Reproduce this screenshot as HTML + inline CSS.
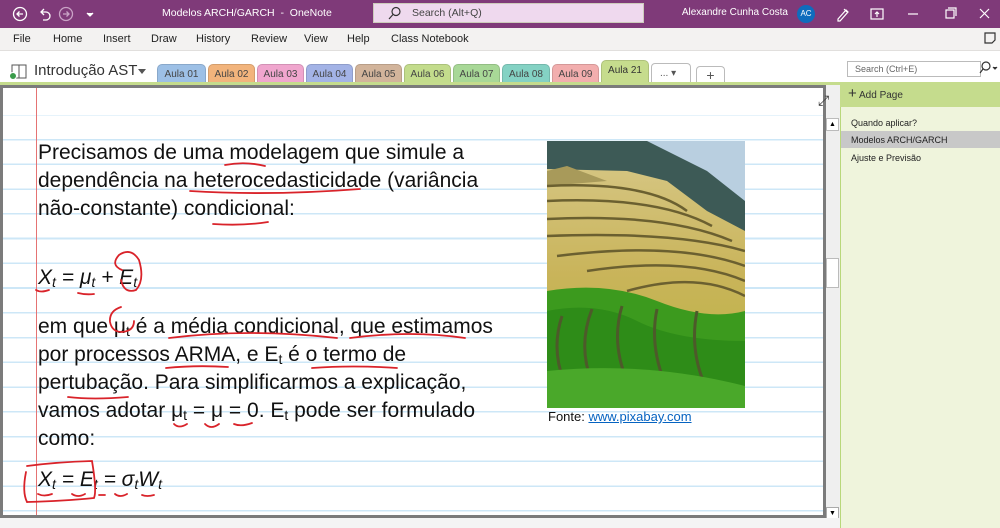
<!DOCTYPE html>
<html><head><meta charset="utf-8"><style>
*{margin:0;padding:0;box-sizing:border-box}
body{width:1000px;height:528px;overflow:hidden;font-family:"Liberation Sans",sans-serif;background:#fff;position:relative}
.a{position:absolute}
.tb{left:0;top:0;width:1000px;height:28px;background:#7f3a79;color:#fff;font-size:10.5px}
.menu{left:0;top:28px;width:1000px;height:23px;background:#f3f2f1;border-bottom:1px solid #e1dfdd;font-size:11px;color:#222}
.menu span{position:absolute;top:5px}
.tab{top:64px;height:19px;border-radius:5px 5px 0 0;font-size:10px;color:#444;text-align:center;line-height:19px;border:1px solid rgba(0,0,0,.12);border-bottom:none}
.line{position:absolute;left:38px;font-size:21px;color:#111;line-height:28px;white-space:nowrap}
.m{font-style:italic}
sub{font-size:14px;vertical-align:-3px;line-height:0}
</style></head><body>
<div class="a tb">
 <svg class="a" style="left:12px;top:6px" width="90" height="16" fill="none" stroke="#fff" stroke-width="1.3">
  <circle cx="8" cy="8" r="6.5"/><path d="M11 8H5M7.5 5.5L5 8l2.5 2.5"/>
  <path d="M32 3l-3 3 3 3M29 6h5a4 4 0 0 1 0 8h-3"/>
  <circle cx="54" cy="8" r="6.5" stroke="#c9a3c6"/><path d="M51 8h6M54.5 5.5L57 8l-2.5 2.5" stroke="#c9a3c6"/>
  <path d="M75 7l3 3 3-3" fill="#fff"/>
 </svg>
 <div class="a" style="left:162px;top:7px">Modelos ARCH/GARCH&nbsp; - &nbsp;OneNote</div>
 <div class="a" style="left:373px;top:3px;width:271px;height:20px;background:#efd9ee;border:1px solid #ccb;color:#444;padding:3px 0 0 38px">Search (Alt+Q)</div>
 <svg class="a" style="left:388px;top:6px" width="14" height="14" fill="none" stroke="#333" stroke-width="1.2"><circle cx="8" cy="5.5" r="4"/><path d="M5 8.5L1 13"/></svg>
 <div class="a" style="right:212px;top:7px;font-size:10px">Alexandre Cunha Costa</div>
 <div class="a" style="left:797px;top:5px;width:18px;height:18px;border-radius:50%;background:#0f6cbd;font-size:8px;text-align:center;line-height:18px">AC</div>
 <svg class="a" style="left:833px;top:6px" width="167" height="16" fill="none" stroke="#fff" stroke-width="1.2">
  <path d="M5 13l8-9 2 2-8 9H5zM11 3l3 3"/>
  <rect x="38" y="3" width="12" height="10"/><path d="M44 11V6M42 8l2-2 2 2"/>
  <path d="M75 8h10"/><rect x="113" y="4" width="8" height="8"/><path d="M115 2h8v8"/>
  <path d="M147 3l9 9M156 3l-9 9"/>
 </svg>
</div>
<div class="a menu">
 <span style="left:13px">File</span><span style="left:53px">Home</span><span style="left:103px">Insert</span><span style="left:151px">Draw</span><span style="left:196px">History</span><span style="left:251px">Review</span><span style="left:304px">View</span><span style="left:347px">Help</span><span style="left:391px">Class Notebook</span>
 <svg class="a" style="left:983px;top:3px" width="14" height="14" fill="none" stroke="#333" stroke-width="1.2"><path d="M2 2h10v7l-3 3H2z"/></svg>
</div>
<!-- notebook row -->
<svg class="a" style="left:9px;top:63px" width="20" height="18" fill="none" stroke="#555"><rect x="3" y="2" width="14" height="13"/><path d="M10 2v13"/><circle cx="4" cy="13" r="3.5" fill="#3a9b4a" stroke="#fff"/></svg>
<div class="a" style="left:34px;top:62px;font-size:15px;color:#333">Introdução AST</div>
<div class="a" style="left:138px;top:69px;border:4px solid transparent;border-top:5px solid #555"></div>
<div class="a tab" style="left:157px;width:49px;background:#9dc0e6">Aula 01</div>
<div class="a tab" style="left:208px;width:47px;background:#f2b47c">Aula 02</div>
<div class="a tab" style="left:257px;width:47px;background:#f0a6ce">Aula 03</div>
<div class="a tab" style="left:306px;width:47px;background:#a3b3e6">Aula 04</div>
<div class="a tab" style="left:355px;width:47px;background:#d2b49b">Aula 05</div>
<div class="a tab" style="left:404px;width:47px;background:#c3dc8c">Aula 06</div>
<div class="a tab" style="left:453px;width:47px;background:#a8d897">Aula 07</div>
<div class="a tab" style="left:502px;width:48px;background:#84d2c4">Aula 08</div>
<div class="a tab" style="left:552px;width:47px;background:#f2aeae">Aula 09</div>
<div class="a tab" style="left:601px;width:48px;top:60px;height:23px;background:#c6dc8d;color:#333">Aula 21</div>
<div class="a" style="left:651px;top:63px;width:40px;height:20px;border:1px solid #bbb;border-bottom:none;border-radius:4px 4px 0 0;font-size:10px;color:#555;padding:4px 0 0 8px">... ▾</div>
<div class="a" style="left:696px;top:66px;width:29px;height:17px;border:1px solid #bbb;border-bottom:none;border-radius:4px 4px 0 0;font-size:14px;color:#555;text-align:center;line-height:16px">+</div>
<div class="a" style="left:847px;top:61px;width:134px;height:16px;border:1px solid #bbb;font-size:9px;color:#666;padding:2px 0 0 7px">Search (Ctrl+E)</div>
<svg class="a" style="left:978px;top:61px" width="20" height="14" fill="none" stroke="#333" stroke-width="1.2"><circle cx="8" cy="5" r="4"/><path d="M5 8L2 12"/><path d="M15 6l2 2 2-2" fill="#333"/></svg>
<div class="a" style="left:0;top:82px;width:1000px;height:3px;background:#c5dc8d"></div>
<!-- page -->
<div class="a" style="left:0;top:85px;width:840px;height:443px;background:#f0f0f0"></div>
<div class="a" style="left:0;top:85px;width:826px;height:433px;background:#7b7b7b"></div>
<div class="a" style="left:3px;top:88px;width:820px;height:427px;background:#fff;background-image:repeating-linear-gradient(to bottom,transparent 0,transparent 23px,#cde7f7 23px,#cde7f7 24.75px);background-position:0 3px"></div>
<div class="a" style="left:3px;top:88px;width:820px;height:27px;background:#fff"></div>
<div class="a" style="left:36px;top:88px;width:1px;height:427px;background:#e57373"></div>
<div class="a" style="left:818px;top:92px;font-size:14px;color:#333">⤢</div>
<div class="a" style="left:826px;top:118px;width:13px;height:410px;background:#efefef"></div>
<div class="a" style="left:826px;top:118px;width:13px;height:13px;border:1px solid #bbb;background:#fff;font-size:7px;text-align:center;line-height:11px">▲</div>
<div class="a" style="left:826px;top:258px;width:13px;height:30px;border:1px solid #bbb;background:#fff"></div>
<div class="a" style="left:826px;top:507px;width:13px;height:13px;border:1px solid #aaa;background:#fff;font-size:7px;text-align:center;line-height:11px">▼</div>
<div class="a" style="left:0;top:518px;width:840px;height:10px;background:#f4f4f4"></div>
<!-- text -->
<div class="line" style="top:139px">Precisamos de uma modelagem que simule a</div>
<div class="line" style="top:167px">dependência na heterocedasticidade (variância</div>
<div class="line" style="top:195px">não-constante) condicional:</div>
<div class="line m" style="top:264px">X<sub>t</sub> = μ<sub>t</sub> + E<sub>t</sub></div>
<div class="line" style="top:313px">em que μ<sub>t</sub> é a média condicional, que estimamos</div>
<div class="line" style="top:341px">por processos ARMA, e E<sub>t</sub> é o termo de</div>
<div class="line" style="top:369px">pertubação. Para simplificarmos a explicação,</div>
<div class="line" style="top:397px">vamos adotar μ<sub>t</sub> = μ = 0. E<sub>t</sub> pode ser formulado</div>
<div class="line" style="top:425px">como:</div>
<div class="line m" style="top:466px">X<sub>t</sub> = E<sub>t</sub> = σ<sub>t</sub>W<sub>t</sub></div>
<!-- image -->
<svg class="a" style="left:547px;top:141px" width="198" height="267">
 <defs><linearGradient id="g" x1="0" y1="0" x2="0" y2="1"><stop offset="0" stop-color="#d8c98a"/><stop offset=".5" stop-color="#c9b45a"/><stop offset="1" stop-color="#b6b33d"/></linearGradient></defs>
 <rect width="198" height="267" fill="url(#g)"/>
 <path d="M0 0H198V90L160 70 120 40 80 30 0 28Z" fill="#3d5a56"/>
 <path d="M100 0H198V60L160 30Z" fill="#b9cfe0"/>
 <path d="M0 30L20 25 60 40 0 45Z" fill="#a89a5a"/>
 <g fill="none" stroke="#6b6030" stroke-width="2.5">
  <path d="M0 45Q100 40 140 70"/><path d="M0 60Q110 55 165 85"/><path d="M0 78Q120 72 185 100"/><path d="M0 95Q130 90 198 110"/><path d="M10 115Q130 100 198 125"/><path d="M40 130Q140 115 198 140"/><path d="M80 150Q150 130 198 155"/>
 </g>
 <path d="M0 150Q60 140 110 160T198 170V267H0Z" fill="#3c9a1e"/>
 <path d="M0 170Q50 160 90 180T198 200V267H0Z" fill="#2e8c18"/>
 <g fill="none" stroke="#4d5a2a" stroke-width="3">
  <path d="M15 175Q0 220 30 265"/><path d="M45 168Q25 220 60 267"/><path d="M75 165Q60 215 95 267"/><path d="M110 168Q100 215 130 267"/><path d="M150 170Q140 220 170 267"/>
 </g>
 <path d="M0 230Q100 220 198 245V267H0Z" fill="#4aa82a"/>
</svg>
<div class="a" style="left:548px;top:409px;font-size:13px;color:#111">Fonte: <span style="color:#0563c1;text-decoration:underline">www.pixabay.com</span></div>
<!-- ink -->
<svg class="a" style="left:0;top:0" width="840" height="528" fill="none" stroke="#d9232a" stroke-width="1.8" stroke-linecap="round">
 <path d="M225 165q20-4 40 1"/><path d="M190 191q80 5 170-2"/><path d="M213 224q30 2 55-2"/>
 <path d="M36 290q5 3 13 0"/><path d="M78 293q8 2 16 1"/><path d="M122 270q-12-5-3-15 12-8 20 5 6 20-3 30-12 4-15-10"/>
 <path d="M121 307q-12 4-11 15 2 10 12 10 12-1 12-11"/><path d="M169 338q80-10 168 0"/><path d="M350 338q60-8 115 0"/>
 <path d="M166 368q30-3 62-1"/><path d="M312 368q40-3 85 0"/><path d="M68 397q25 3 60 0"/>
 <path d="M174 424q5 5 13 0"/><path d="M205 424q6 6 14 0"/><path d="M234 424q7 3 18-1"/>
 <path d="M26 472q-4 20 1 30"/><path d="M27 466q30-4 65-5 5 30 2 37-30 3-67 4"/><path d="M38 494q6 3 14 0"/><path d="M72 494q6 4 13 0"/><path d="M99 495h6"/><path d="M115 494q5 4 12 0"/><path d="M142 495q5 2 12 0"/>
</svg>
<!-- sidebar -->
<div class="a" style="left:840px;top:85px;width:160px;height:443px;background:#eff4dc;border-left:1px solid #b8d77a"></div>
<div class="a" style="left:840px;top:85px;width:160px;height:22px;background:#c5dc8d;font-size:10px;color:#333;padding:4px 0 0 8px"><span style="font-size:15px;line-height:10px">+</span> Add Page</div>
<div class="a" style="left:851px;top:118px;font-size:9px;color:#222">Quando aplicar?</div>
<div class="a" style="left:841px;top:131px;width:159px;height:17px;background:#c8c8c8"></div>
<div class="a" style="left:851px;top:135px;font-size:9px;color:#222">Modelos ARCH/GARCH</div>
<div class="a" style="left:851px;top:153px;font-size:9px;color:#222">Ajuste e Previsão</div>
</body></html>
